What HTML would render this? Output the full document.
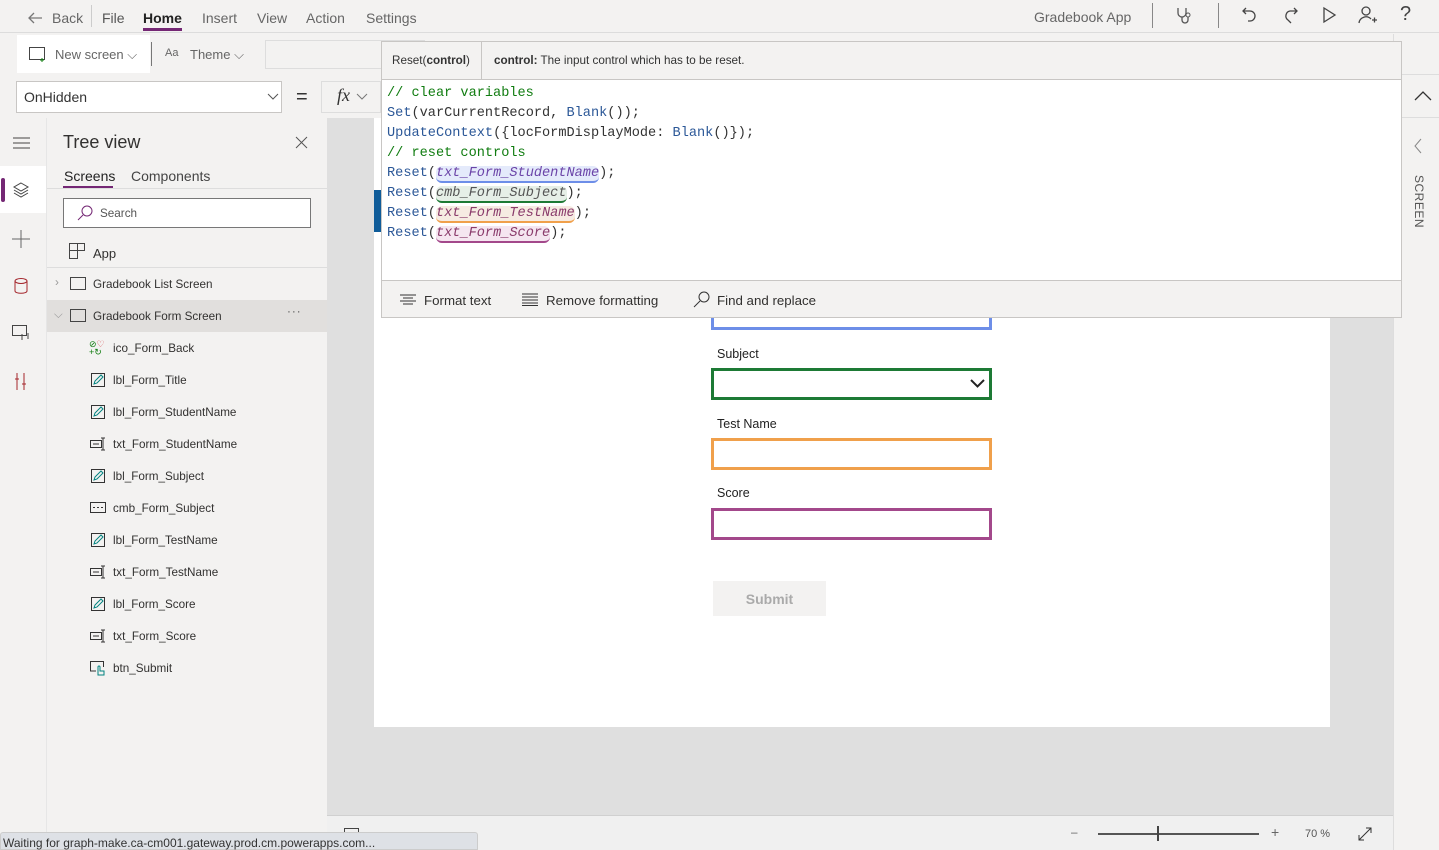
<!DOCTYPE html>
<html><head><meta charset="utf-8"><style>
*{margin:0;padding:0;box-sizing:border-box}
body{width:1439px;height:850px;overflow:hidden;background:#f3f2f1;font-family:"Liberation Sans",sans-serif;color:#323130;position:relative}
.a{position:absolute}
.t{font-size:14px;white-space:nowrap}
.mono{font-family:"Liberation Mono",monospace;font-size:13.6px;white-space:pre;line-height:20px}
.tree{font-size:11.7px;white-space:nowrap}
svg{position:absolute;overflow:visible}
</style></head><body>
<!-- top bar -->
<div class="a" style="left:0;top:0;width:1439px;height:33px;background:#f3f2f1;border-bottom:1px solid #dcdcdc"></div>
<svg style="left:27px;top:10px" width="16" height="16"><path d="M15 8H2M7 3L2 8l5 5" stroke="#777" fill="none" stroke-width="1.3"/></svg>
<div class="a t" style="left:52px;top:10px;color:#666">Back</div>
<div class="a" style="left:91px;top:5px;width:1px;height:22px;background:#ccc"></div>
<div class="a t" style="left:102px;top:10px;color:#555">File</div>
<div class="a t" style="left:143px;top:10px;font-weight:bold;color:#222">Home</div>
<div class="a" style="left:143px;top:28px;width:39px;height:3px;background:#742774"></div>
<div class="a t" style="left:202px;top:10px;color:#666">Insert</div>
<div class="a t" style="left:257px;top:10px;color:#666">View</div>
<div class="a t" style="left:306px;top:10px;color:#666">Action</div>
<div class="a t" style="left:366px;top:10px;color:#666">Settings</div>
<div class="a t" style="left:1034px;top:9px;color:#666">Gradebook App</div>
<div class="a" style="left:1152px;top:3px;width:1px;height:25px;background:#888"></div>
<svg style="left:1176px;top:6px" width="20" height="20"><path d="M2 2v5a4 4 0 0 0 8 0V2M6 11v3a3 3 0 0 0 6 0v-3" stroke="#555" fill="none" stroke-width="1.3"/><circle cx="12" cy="9" r="2" stroke="#555" fill="none"/></svg>
<div class="a" style="left:1218px;top:3px;width:1px;height:25px;background:#888"></div>
<svg style="left:1242px;top:6px" width="18" height="20"><path d="M4 2L1 5l3 3M1 5h7a5 5 0 0 1 0 10h-2" stroke="#444" fill="none" stroke-width="1.3"/></svg>
<svg style="left:1282px;top:6px" width="18" height="20"><path d="M12 2l3 3-3 3M15 5H8a5 5 0 0 0-2 9l3 3" stroke="#444" fill="none" stroke-width="1.3"/></svg>
<svg style="left:1323px;top:7px" width="14" height="16"><path d="M1 1l11 7-11 7z" stroke="#444" fill="none" stroke-width="1.3"/></svg>
<svg style="left:1358px;top:6px" width="20" height="20"><circle cx="8" cy="5" r="4" stroke="#444" fill="none" stroke-width="1.3"/><path d="M1 17a7 7 0 0 1 12-4M14 14h5M16.5 11.5v5" stroke="#444" fill="none" stroke-width="1.3"/></svg>
<div class="a" style="left:1400px;top:3px;font-size:20px;color:#444">?</div>

<!-- ribbon -->
<div class="a" style="left:17px;top:35px;width:133px;height:38px;background:#fff"></div>
<svg style="left:29px;top:47px" width="18" height="15"><rect x="0.5" y="0.5" width="15" height="12" stroke="#444" fill="none"/><path d="M13 11v4M11 13h4" stroke="#107c10"/></svg>
<div class="a t" style="left:55px;top:47px;font-size:13px;color:#666">New screen ⌵</div>
<div class="a" style="left:151px;top:42px;width:1px;height:24px;background:#777"></div>
<div class="a" style="left:165px;top:47px;font-size:11px;color:#666">Aa</div>
<div class="a t" style="left:190px;top:47px;font-size:13px;color:#666">Theme ⌵</div>
<div class="a" style="left:265px;top:40px;width:160px;height:29px;background:#f3f2f1;border:1px solid #ddd"></div>

<!-- formula row -->
<div class="a" style="left:16px;top:81px;width:266px;height:32px;background:#fff;border:1px solid #c8c6c4"></div>
<div class="a t" style="left:24px;top:89px;font-size:14px;color:#333">OnHidden</div>
<svg style="left:267px;top:93px" width="12" height="8"><path d="M1 1l5 5 5-5" stroke="#555" fill="none"/></svg>
<div class="a" style="left:296px;top:86px;font-size:20px;color:#333">=</div>
<div class="a" style="left:321px;top:81px;width:60px;height:32px;background:#f3f2f1;border:1px solid #ddd"></div>
<div class="a" style="left:337px;top:85px;font-family:'Liberation Serif',serif;font-style:italic;font-size:18px;color:#333">fx</div>
<svg style="left:356px;top:93px" width="12" height="8"><path d="M1 1l5 5 5-5" stroke="#777" fill="none"/></svg>

<!-- left rail -->
<div class="a" style="left:0;top:118px;width:47px;height:732px;background:#f3f2f1;border-right:1px solid #e6e6e6"></div>
<svg style="left:13px;top:137px" width="17" height="12"><path d="M0 1h17M0 6h17M0 11h17" stroke="#444"/></svg>
<div class="a" style="left:0;top:166px;width:46px;height:47px;background:#fff"></div>
<div class="a" style="left:1px;top:178px;width:4px;height:24px;background:#742774;border-radius:2px"></div>
<svg style="left:13px;top:182px" width="16" height="16"><path d="M8 1l7 4-7 4-7-4zM1 8l7 4 7-4M1 11l7 4 7-4" stroke="#444" fill="none"/></svg>
<svg style="left:12px;top:230px" width="18" height="18"><path d="M9 0v18M0 9h18" stroke="#666"/></svg>
<svg style="left:14px;top:278px" width="14" height="16"><ellipse cx="7" cy="3" rx="6" ry="2.5" stroke="#a4262c" fill="none"/><path d="M1 3v10c0 3 12 3 12 0V3" stroke="#a4262c" fill="none"/></svg>
<svg style="left:12px;top:325px" width="18" height="16"><rect x="0.5" y="0.5" width="14" height="10" stroke="#444" fill="none"/><path d="M10 9v6M16 8v6" stroke="#444"/></svg>
<svg style="left:15px;top:373px" width="12" height="17"><path d="M2 0v17M9 0v17M0 6h4M7 11h4" stroke="#a4262c"/></svg>

<!-- tree panel -->
<div class="a" style="left:47px;top:118px;width:280px;height:732px;background:#f3f2f1"></div>
<div class="a" style="left:63px;top:132px;font-size:18px;color:#323130">Tree view</div>
<svg style="left:295px;top:136px" width="13" height="13"><path d="M1 1l11 11M12 1L1 12" stroke="#555"/></svg>
<div class="a t" style="left:64px;top:168px;color:#222">Screens</div>
<div class="a" style="left:63px;top:186px;width:50px;height:2px;background:#742774"></div>
<div class="a t" style="left:131px;top:168px;color:#444">Components</div>
<div class="a" style="left:47px;top:188px;width:280px;height:1px;background:#ddd"></div>
<div class="a" style="left:63px;top:198px;width:248px;height:30px;background:#fff;border:1px solid #777"></div>
<svg style="left:77px;top:205px" width="16" height="16"><circle cx="10" cy="6" r="5" stroke="#742774" fill="none"/><path d="M6 10l-5 5" stroke="#742774"/></svg>
<div class="a tree" style="left:100px;top:207px;color:#555">Search</div>
<svg style="left:69px;top:243px" width="16" height="16"><path d="M0.5 0.5h15v7h-7v8h-8zM8.5 0.5v7M0.5 7.5h8" stroke="#444" fill="none"/></svg>
<div class="a tree" style="left:93px;top:246px;font-size:13px">App</div>
<div class="a" style="left:47px;top:267px;width:280px;height:1px;background:#ddd"></div>
<div class="a tree" style="left:55px;top:276px;color:#999">›</div>
<div class="a" style="left:70px;top:277px;width:16px;height:13px;border:1px solid #444"></div>
<div class="a tree" style="left:93px;top:278px">Gradebook List Screen</div>
<div class="a" style="left:47px;top:300px;width:280px;height:32px;background:#e1dfdd"></div>
<div class="a tree" style="left:54px;top:308px;color:#999">⌵</div>
<div class="a" style="left:70px;top:309px;width:16px;height:13px;border:1px solid #444"></div>
<div class="a tree" style="left:93px;top:310px">Gradebook Form Screen</div>
<div class="a tree" style="left:287px;top:305px;color:#555;letter-spacing:1px">···</div>

<div class="a tree" style="left:89px;top:340px;font-size:9px;line-height:8px;color:#107c10">⊘<span style="color:#d13438">♡</span><br>+↻</div>
<div class="a tree" style="left:113px;top:342px">ico_Form_Back</div>
<div class="a tree" style="left:113px;top:374px">lbl_Form_Title</div>
<div class="a tree" style="left:113px;top:406px">lbl_Form_StudentName</div>
<div class="a tree" style="left:113px;top:438px">txt_Form_StudentName</div>
<div class="a tree" style="left:113px;top:470px">lbl_Form_Subject</div>
<div class="a tree" style="left:113px;top:502px">cmb_Form_Subject</div>
<div class="a tree" style="left:113px;top:534px">lbl_Form_TestName</div>
<div class="a tree" style="left:113px;top:566px">txt_Form_TestName</div>
<div class="a tree" style="left:113px;top:598px">lbl_Form_Score</div>
<div class="a tree" style="left:113px;top:630px">txt_Form_Score</div>
<div class="a tree" style="left:113px;top:662px">btn_Submit</div>
<!-- tree icons -->
<svg style="left:91px;top:373px" width="14" height="14"><rect x="0.5" y="0.5" width="13" height="13" stroke="#333" fill="none"/><path d="M3 11l1-3 6-6 2 2-6 6z" stroke="#00827f" fill="none"/></svg>
<svg style="left:91px;top:405px" width="14" height="14"><rect x="0.5" y="0.5" width="13" height="13" stroke="#333" fill="none"/><path d="M3 11l1-3 6-6 2 2-6 6z" stroke="#00827f" fill="none"/></svg>
<svg style="left:90px;top:438px" width="17" height="12"><rect x="0.5" y="2.5" width="11" height="7" stroke="#333" fill="none"/><path d="M3 6h6M13 0v12M11 0h4M11 12h4" stroke="#333"/></svg>
<svg style="left:91px;top:469px" width="14" height="14"><rect x="0.5" y="0.5" width="13" height="13" stroke="#333" fill="none"/><path d="M3 11l1-3 6-6 2 2-6 6z" stroke="#00827f" fill="none"/></svg>
<svg style="left:90px;top:502px" width="16" height="11"><rect x="0.5" y="0.5" width="15" height="10" stroke="#333" fill="none"/><path d="M3 5.5h2M7 5.5h2M11 5.5h2" stroke="#333"/></svg>
<svg style="left:91px;top:533px" width="14" height="14"><rect x="0.5" y="0.5" width="13" height="13" stroke="#333" fill="none"/><path d="M3 11l1-3 6-6 2 2-6 6z" stroke="#00827f" fill="none"/></svg>
<svg style="left:90px;top:566px" width="17" height="12"><rect x="0.5" y="2.5" width="11" height="7" stroke="#333" fill="none"/><path d="M3 6h6M13 0v12M11 0h4M11 12h4" stroke="#333"/></svg>
<svg style="left:91px;top:597px" width="14" height="14"><rect x="0.5" y="0.5" width="13" height="13" stroke="#333" fill="none"/><path d="M3 11l1-3 6-6 2 2-6 6z" stroke="#00827f" fill="none"/></svg>
<svg style="left:90px;top:630px" width="17" height="12"><rect x="0.5" y="2.5" width="11" height="7" stroke="#333" fill="none"/><path d="M3 6h6M13 0v12M11 0h4M11 12h4" stroke="#333"/></svg>
<svg style="left:90px;top:661px" width="17" height="15"><path d="M6 10H0.5V0.5h13V6" stroke="#333" fill="none"/><path d="M8 14V6a1 1 0 0 1 2 0v4h4v4z" stroke="#00827f" fill="none"/></svg>

<!-- canvas -->
<div class="a" style="left:327px;top:118px;width:1066px;height:697px;background:#dfdfdf"></div>
<div class="a" style="left:374px;top:118px;width:956px;height:609px;background:#fff"></div>
<div class="a" style="left:374px;top:190px;width:7px;height:42px;background:#0f5c99"></div>
<div class="a" style="left:711px;top:300px;width:281px;height:30px;border:3px solid #6d8ee8;border-top:none"></div>
<div class="a tree" style="left:717px;top:347px;font-size:12.5px;color:#222">Subject</div>
<div class="a" style="left:711px;top:368px;width:281px;height:32px;border:3px solid #1d7a35"></div>
<svg style="left:970px;top:379px" width="15" height="10"><path d="M1 1l6.5 6.5L14 1" stroke="#222" stroke-width="2" fill="none"/></svg>
<div class="a tree" style="left:717px;top:417px;font-size:12.5px;color:#222">Test Name</div>
<div class="a" style="left:711px;top:438px;width:281px;height:32px;border:3px solid #f0a04b"></div>
<div class="a tree" style="left:717px;top:486px;font-size:12.5px;color:#222">Score</div>
<div class="a" style="left:711px;top:508px;width:281px;height:32px;border:3px solid #a3488b"></div>
<div class="a" style="left:713px;top:581px;width:113px;height:35px;background:#f3f2f1;color:#aaa;font-size:14px;font-weight:bold;text-align:center;line-height:37px">Submit</div>

<!-- right panel -->
<div class="a" style="left:1393px;top:34px;width:46px;height:816px;background:#f3f2f1;border-left:1px solid #ddd"></div>
<div class="a" style="left:1402px;top:74px;width:37px;height:1px;background:#ddd"></div>
<div class="a" style="left:1402px;top:117px;width:37px;height:1px;background:#ddd"></div>
<svg style="left:1414px;top:91px" width="18" height="10"><path d="M1 9l8-8 8 8" stroke="#333" fill="none" stroke-width="1.3"/></svg>
<svg style="left:1414px;top:138px" width="8" height="16"><path d="M7 1L1 8l6 7" stroke="#888" fill="none"/></svg>
<div class="a" style="left:1412px;top:175px;font-size:12px;color:#555;writing-mode:vertical-rl;letter-spacing:0.5px">SCREEN</div>

<!-- formula popup -->
<div class="a" style="left:381px;top:41px;width:1021px;height:277px;background:#fff;border:1px solid #c8c6c4"></div>
<div class="a" style="left:382px;top:42px;width:1019px;height:38px;background:#f3f2f1;border-bottom:1px solid #c8c6c4"></div>
<div class="a" style="left:481px;top:42px;width:1px;height:38px;background:#c8c6c4"></div>
<div class="a tree" style="left:392px;top:54px;color:#333">Reset(<b>control</b>)</div>
<div class="a tree" style="left:494px;top:54px;color:#333"><b>control:</b> The input control which has to be reset.</div>
<div class="a mono" style="left:387px;top:84px;color:#2b5797"><span style="color:#107c10">// clear variables</span>
<span>Set</span><span style="color:#333">(varCurrentRecord, </span>Blank<span style="color:#333">());</span>
UpdateContext<span style="color:#333">({locFormDisplayMode: </span>Blank<span style="color:#333">()});</span>
<span style="color:#107c10">// reset controls</span>
Reset<span style="color:#333">(</span><i style="color:#6b44a8;background:#e4eafb;border-bottom:2px solid #6d8ee8;border-radius:6px">txt_Form_StudentName</i><span style="color:#333">);</span>
Reset<span style="color:#333">(</span><i style="color:#555;background:#e6efe7;border-bottom:2px solid #1d7a35;border-radius:6px">cmb_Form_Subject</i><span style="color:#333">);</span>
Reset<span style="color:#333">(</span><i style="color:#8a3b6b;background:#f6ebe2;border-bottom:2px solid #f0a04b;border-radius:6px">txt_Form_TestName</i><span style="color:#333">);</span>
Reset<span style="color:#333">(</span><i style="color:#8a3b6b;background:#f5e6f0;border-bottom:2px solid #a3488b;border-radius:6px">txt_Form_Score</i><span style="color:#333">);</span></div>
<div class="a" style="left:382px;top:280px;width:1019px;height:37px;background:#f3f2f1;border-top:1px solid #c8c6c4"></div>
<svg style="left:400px;top:294px" width="16" height="12"><path d="M0 1h16M3 4h10M0 7h16M3 10h10" stroke="#333"/></svg>
<div class="a t" style="left:424px;top:293px;font-size:13.3px">Format text</div>
<svg style="left:522px;top:293px" width="16" height="13"><path d="M0 1h16M0 4h16M0 7h16M0 10h16M0 12.5h16" stroke="#333"/></svg>
<div class="a t" style="left:546px;top:293px;font-size:13.3px">Remove formatting</div>
<svg style="left:693px;top:291px" width="17" height="17"><circle cx="11" cy="6" r="5" stroke="#333" fill="none"/><path d="M7 10l-6 6" stroke="#333"/></svg>
<div class="a t" style="left:717px;top:293px;font-size:13.3px">Find and replace</div>

<!-- bottom bar -->
<div class="a" style="left:327px;top:815px;width:1066px;height:35px;background:#f0f0f0;border-top:1px solid #d0d0d0"></div>
<div class="a" style="left:344px;top:828px;width:15px;height:12px;border:1px solid #444"></div>
<div class="a tree" style="left:1071px;top:826px;color:#666">–</div>
<div class="a" style="left:1098px;top:833px;width:161px;height:2px;background:#555"></div>
<div class="a" style="left:1157px;top:826px;width:2px;height:15px;background:#444"></div>
<div class="a tree" style="left:1271px;top:824px;font-size:14px;color:#666">+</div>
<div class="a tree" style="left:1305px;top:828px;font-size:11px;color:#555">70 %</div>
<svg style="left:1358px;top:827px" width="14" height="14"><path d="M1 13L13 1M1 8v5h5M8 1h5v5" stroke="#333" fill="none"/></svg>
<div class="a" style="left:0;top:832px;width:478px;height:18px;background:#dee1e6;border:1px solid #ccc;border-radius:3px 3px 0 0"></div>
<div class="a tree" style="left:3px;top:836px;color:#333;font-size:12px">Waiting for graph-make.ca-cm001.gateway.prod.cm.powerapps.com...</div>
</body></html>
